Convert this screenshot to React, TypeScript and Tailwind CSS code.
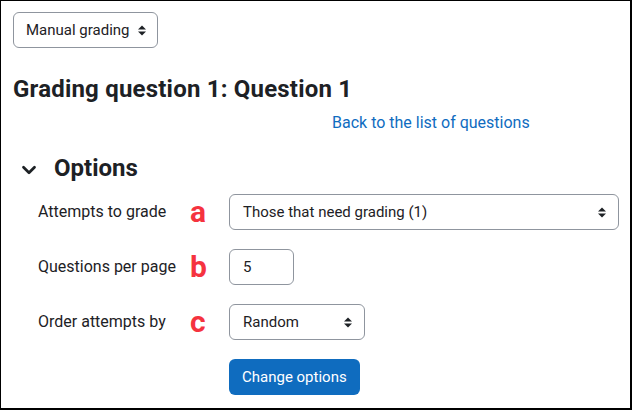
import { ChevronDown } from 'lucide-react';

function Caret() {
  return (
    <svg width="8" height="11" viewBox="0 0 8 11" className="shrink-0">
      <path d="M4 0.5 L8 4.5 H0 Z" fill="#1d2125" />
      <path d="M4 10.5 L8 6.5 H0 Z" fill="#1d2125" />
    </svg>
  );
}

function Select({ value, width }: { value: string; width: string }) {
  return (
    <div
      className={`${width} h-[36px] flex items-center justify-between pl-[13px] pr-[12px] border border-[#8f959e] rounded-[6px] bg-white text-[15px] text-[#1d2125]`}
    >
      <span>{value}</span>
      <Caret />
    </div>
  );
}

function Row({ label, mark, children }: { label: string; mark: string; children: React.ReactNode }) {
  return (
    <div className="flex items-center h-[36px]">
      <div className="w-[152px] text-[16px] text-[#1d2125]">{label}</div>
      <div className="w-[39px] text-[#f5333f] font-bold text-[30px] leading-none">{mark}</div>
      {children}
    </div>
  );
}

export default function App() {
  return (
    <div
      className="w-[632px] h-[410px] bg-white border-l border-t border-r-2 border-b-2 border-black overflow-hidden"
      style={{ fontFamily: 'Roboto, "Liberation Sans", sans-serif' }}
    >
      <div className="pt-[11px] pl-[12px]">
        <div className="inline-flex items-center gap-[8px] h-[36px] pl-[12px] pr-[11px] border border-[#8f959e] rounded-[6px] text-[15px] text-[#1d2125]">
          <span>Manual grading</span>
          <Caret />
        </div>
      </div>

      <h2 className="mt-[27px] pl-[12px] text-[24px] font-bold leading-[28px] tracking-[0.2px] text-[#1d2125]">
        Grading question 1: Question 1
      </h2>

      <div className="mt-[8px] pl-[331px]">
        <span className="text-[16px] leading-[20px] text-[#0f6cbf]">Back to the list of questions</span>
      </div>

      <div className="mt-[19px] pl-[17px] flex items-center gap-[14px]">
        <ChevronDown size={22} strokeWidth={3} color="#1d2125" className="translate-y-[2px]" />
        <span className="text-[24px] font-bold leading-[28px] text-[#1d2125]">Options</span>
      </div>

      <div className="mt-[12px] pl-[37px] flex flex-col gap-[19px]">
        <Row label="Attempts to grade" mark="a">
          <Select value="Those that need grading (1)" width="w-[390px]" />
        </Row>
        <Row label="Questions per page" mark="b">
          <div className="w-[65px] h-[36px] flex items-center pl-[13px] border border-[#8f959e] rounded-[6px] text-[15px] text-[#1d2125]">
            5
          </div>
        </Row>
        <Row label="Order attempts by" mark="c">
          <Select value="Random" width="w-[136px]" />
        </Row>
        <div className="pl-[191px]">
          <button className="h-[36px] px-[13px] rounded-[6px] bg-[#0f6cbf] text-white text-[15px]">
            Change options
          </button>
        </div>
      </div>
    </div>
  );
}
